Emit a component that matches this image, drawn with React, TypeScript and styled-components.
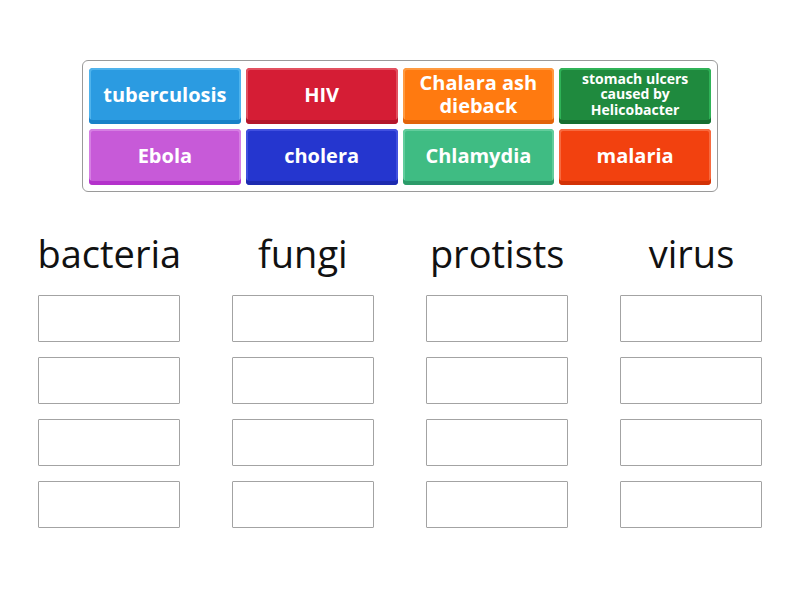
import React, { FC } from 'react';
import styled, { createGlobalStyle } from 'styled-components';

interface ITile {
  label: string;
  base: string;
  light: string;
  dark: string;
  size?: 'normal' | 'small';
}

const tiles: ITile[] = [
  { label: 'tuberculosis', base: '#2b9be1', light: '#4fb3ec', dark: '#1a80c8' },
  { label: 'HIV', base: '#d51d35', light: '#e2505f', dark: '#b3162b' },
  { label: 'Chalara ash dieback', base: '#ff7a10', light: '#ff9a40', dark: '#e2640a' },
  {
    label: 'stomach ulcers caused by Helicobacter',
    base: '#1f8a3e',
    light: '#2fb257',
    dark: '#176c30',
    size: 'small',
  },
  { label: 'Ebola', base: '#c75ad8', light: '#d67fe3', dark: '#b432cb' },
  { label: 'cholera', base: '#2536cf', light: '#4150e0', dark: '#1d2bb0' },
  { label: 'Chlamydia', base: '#3fbc83', light: '#62cd9c', dark: '#2c9b69' },
  { label: 'malaria', base: '#f2410f', light: '#f76a3f', dark: '#d33206' },
];

const groups = ['bacteria', 'fungi', 'protists', 'virus'];
const SLOTS = 4;

const GlobalStyle = createGlobalStyle`
  html, body {
    margin: 0;
    padding: 0;
    background: #ffffff;
  }
  * {
    box-sizing: border-box;
  }
  body {
    font-family: 'Open Sans', 'Liberation Sans', sans-serif;
  }
`;

const Page = styled.div`
  width: 800px;
  height: 600px;
  padding-top: 60px;
`;

const Bank = styled.div`
  width: 636px;
  margin: 0 auto;
  padding: 7px 6px 6px;
  border: 1px solid #9a9a9a;
  border-radius: 6px;
  display: grid;
  grid-template-columns: repeat(4, 1fr);
  grid-auto-rows: 56px;
  gap: 5px;
`;

const Tile = styled.div<{ $base: string; $light: string; $dark: string; $small: boolean }>`
  display: flex;
  align-items: center;
  justify-content: center;
  text-align: center;
  padding: 0 4px 4px;
  border-radius: 4px;
  background: ${({ $base }) => $base};
  box-shadow: inset 0 -4px 0 ${({ $dark }) => $dark},
    inset 0 0 0 2px ${({ $light }) => $light};
  color: #ffffff;
  font-weight: 700;
  font-size: ${({ $small }) => ($small ? '14px' : '20px')};
  line-height: ${({ $small }) => ($small ? '15.5px' : '23px')};
`;

const Columns = styled.div`
  width: 725px;
  margin: 37px auto 0;
  display: flex;
  justify-content: space-between;
`;

const Column = styled.div`
  width: 142px;
  display: flex;
  flex-direction: column;
  align-items: stretch;
`;

const Heading = styled.div`
  font-size: 38px;
  line-height: 49px;
  color: #111111;
  text-align: center;
  white-space: nowrap;
  margin-bottom: 17px;
`;

const Slot = styled.div`
  height: 47px;
  border: 1px solid #a3a3a3;
  border-radius: 1px;
  background: #ffffff;

  & + & {
    margin-top: 15px;
  }
`;

const App: FC = () => (
  <Page>
    <GlobalStyle />
    <Bank>
      {tiles.map((tile) => (
        <Tile
          key={tile.label}
          $base={tile.base}
          $light={tile.light}
          $dark={tile.dark}
          $small={tile.size === 'small'}
        >
          {tile.label}
        </Tile>
      ))}
    </Bank>
    <Columns>
      {groups.map((group) => (
        <Column key={group}>
          <Heading>{group}</Heading>
          {Array.from({ length: SLOTS }, (_, i) => (
            <Slot key={i} />
          ))}
        </Column>
      ))}
    </Columns>
  </Page>
);

export default App;
